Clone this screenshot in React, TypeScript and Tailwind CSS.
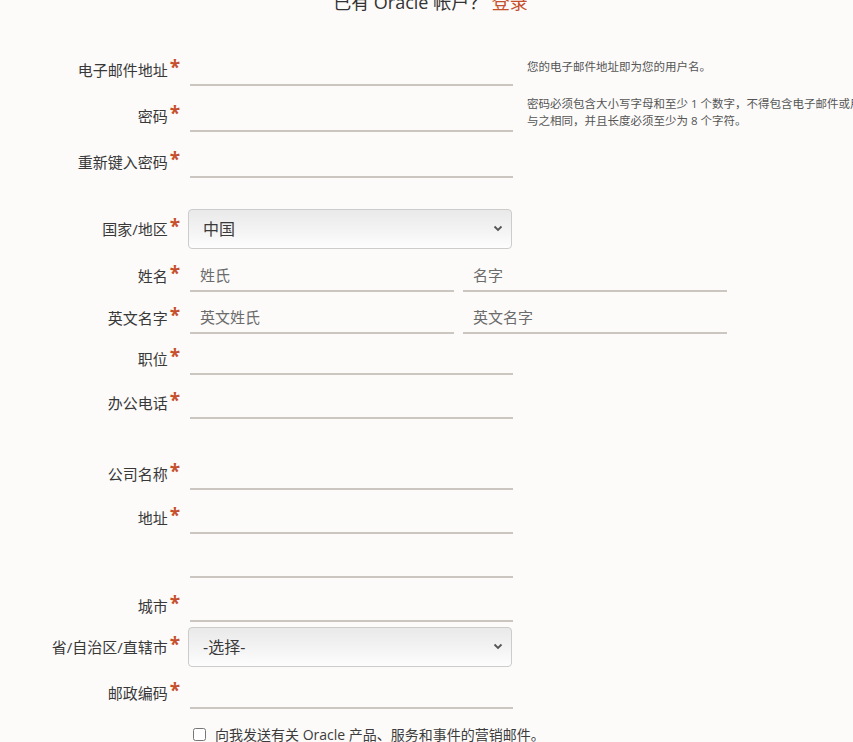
import type { ReactNode } from "react";

// Oracle account sign-up form (zh-CN). Fixed label column on the left, fields at x=190.

function Star() {
  return <span className="ml-[2px] relative -top-[3px] text-[19px] font-bold leading-none text-[#c6502c]">*</span>;
}

function Label({ text, star = true }: { text?: string; star?: boolean }) {
  return (
    <div className="w-[180px] shrink-0 flex items-center justify-end text-[15px] text-[#383838]">
      {text && <span>{text}</span>}
      {text && star && <Star />}
      {!text && <span className="w-[14px]" />}
    </div>
  );
}

function Line({ placeholder, w = "w-[323px]" }: { placeholder?: string; w?: string }) {
  return (
    <input
      placeholder={placeholder}
      className={`${w} h-[32px] border-0 border-b-2 border-[#cbc6bf] bg-transparent pl-[10px] text-[15px] text-[#333] outline-none placeholder:text-[#6b6b6b]`}
    />
  );
}

function Row({ label, className = "", children }: { label?: string; className?: string; children: ReactNode }) {
  return (
    <div className={`flex items-center ${className}`}>
      <Label text={label} />
      <div className="ml-[10px] flex items-start">{children}</div>
    </div>
  );
}

function Select({ value }: { value: string }) {
  return (
    <div className="relative -ml-[2px]">
      <select
        defaultValue={value}
        className="h-[40px] w-[324px] appearance-none rounded-[4px] border border-[#cccccc] bg-gradient-to-b from-[#e9e9e9] to-[#fdfdfd] pl-[14px] text-[16px] text-[#3a3a3a] outline-none"
      >
        <option>{value}</option>
      </select>
      <svg
        className="pointer-events-none absolute right-[9px] top-[16px]"
        width="10"
        height="7"
        viewBox="0 0 10 7"
        fill="none"
      >
        <path d="M1.5 1.5 5 5l3.5-3.5" stroke="#555" strokeWidth="1.8" />
      </svg>
    </div>
  );
}

export default function App() {
  return (
    <div className="min-h-[742px] w-full overflow-hidden bg-[#fcfbfa] font-['Open_Sans','Noto_Sans_CJK_SC',sans-serif]">
      <div className="-mt-[10px] h-[24px] text-center text-[18px] leading-[24px] text-[#333] pl-[8px]">
        已有 Oracle 帐户？ <span className="text-[#c6502c]">登录</span>
      </div>

      <Row label="电子邮件地址" className="mt-[40px]">
        <Line />
        <div className="ml-[14px] mt-[4px] whitespace-nowrap text-[11.5px] leading-[17px] text-[#555]">
          您的电子邮件地址即为您的用户名。
        </div>
      </Row>
      <Row label="密码" className="mt-[14px]">
        <Line />
        <div className="ml-[14px] -mt-[5px] whitespace-nowrap text-[11.5px] leading-[17px] text-[#555]">
          <div>密码必须包含大小写字母和至少 1 个数字，不得包含电子邮件或用户名，也不得</div>
          <div>与之相同，并且长度必须至少为 8 个字符。</div>
        </div>
      </Row>
      <Row label="重新键入密码" className="mt-[14px]">
        <Line />
      </Row>

      <Row label="国家/地区" className="mt-[31px]">
        <Select value="中国" />
      </Row>
      <Row label="姓名" className="mt-[11px]">
        <div className="flex gap-[9px]">
          <Line placeholder="姓氏" w="w-[264px]" />
          <Line placeholder="名字" w="w-[264px]" />
        </div>
      </Row>
      <Row label="英文名字" className="mt-[10px]">
        <div className="flex gap-[9px]">
          <Line placeholder="英文姓氏" w="w-[264px]" />
          <Line placeholder="英文名字" w="w-[264px]" />
        </div>
      </Row>
      <Row label="职位" className="mt-[9px]">
        <Line />
      </Row>
      <Row label="办公电话" className="mt-[12px]">
        <Line />
      </Row>

      <Row label="公司名称" className="mt-[39px]">
        <Line />
      </Row>
      <Row label="地址" className="mt-[12px]">
        <Line />
      </Row>
      <Row className="mt-[12px]">
        <Line />
      </Row>
      <Row label="城市" className="mt-[12px]">
        <Line />
      </Row>
      <Row label="省/自治区/直辖市" className="mt-[5px]">
        <Select value="-选择-" />
      </Row>
      <Row label="邮政编码" className="mt-[10px]">
        <Line />
      </Row>

      <label className="ml-[193px] mt-[15px] flex items-center gap-[9px] text-[14px] text-[#3c3c3c]">
        <input type="checkbox" className="h-[13px] w-[13px] m-0" />
        <span>向我发送有关 Oracle 产品、服务和事件的营销邮件。</span>
      </label>
    </div>
  );
}
